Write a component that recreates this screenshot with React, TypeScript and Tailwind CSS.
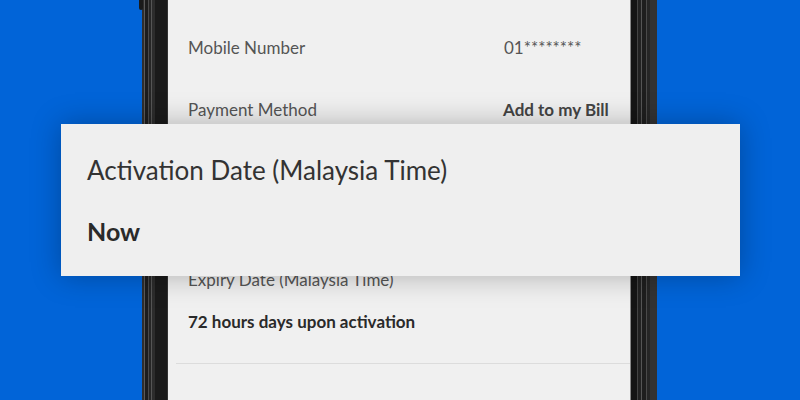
import React from "react";

export default function App() {
  const font = { fontFamily: "Lato, 'Open Sans', sans-serif" };
  return (
    <div
      className="relative w-[800px] h-[400px] overflow-hidden bg-[#0164d8]"
      style={font}
    >
      <div className="flex h-full pl-[142px]">
        {/* left frame */}
        <div className="relative flex h-full w-[26px]">
          <div className="w-[2px] bg-[#2e2e2e]" />
          <div className="w-[1px] bg-[#5a5a5a]" />
          <div className="w-[3px] bg-[#1d1d1d]" />
          <div className="w-[1px] bg-[#4a4a4a]" />
          <div className="w-[2px] bg-[#262626]" />
          <div className="w-[1px] bg-[#555]" />
          <div className="w-[3px] bg-[#2c2c2c]" />
          <div className="flex-1 bg-[#1a1a1a]" />
          <div className="w-[1px] bg-[#333]" />
        </div>
        {/* screen */}
        <div className="flex h-full w-[462px] flex-col bg-[#f0f0f0] text-[17px] leading-[24px]">
          <div className="flex px-[20px] pt-[36px]">
            <div className="w-[316px] text-[#555]">Mobile Number</div>
            <div className="text-[#555]">01********</div>
          </div>
          <div className="flex px-[20px] pt-[38px]">
            <div className="w-[315px] text-[#555]">Payment Method</div>
            <div className="font-bold text-[#444]">Add to my Bill</div>
          </div>
          <div className="flex flex-col px-[20px] pt-[146px]">
            <div className="text-[#555]">Expiry Date (Malaysia Time)</div>
            <div className="pt-[18px] font-bold text-[#2a2a2a]">
              72 hours days upon activation
            </div>
          </div>
          <div className="mt-[29px] ml-[8px] h-[1px] bg-[#dcdcdc]" />
        </div>
        {/* right frame */}
        <div className="flex h-full w-[27px]">
          <div className="w-[1px] bg-[#8a8a8a]" />
          <div className="w-[6px] bg-[#151515]" />
          <div className="w-[1px] bg-[#444]" />
          <div className="w-[3px] bg-[#222]" />
          <div className="w-[1px] bg-[#555]" />
          <div className="w-[4px] bg-[#1e1e1e]" />
          <div className="w-[1px] bg-[#4a4a4a]" />
          <div className="w-[3px] bg-[#262626]" />
          <div className="flex-1 bg-[#333]" />
        </div>
      </div>

      {/* side button */}
      <div className="absolute left-[139px] top-0 h-[10px] w-[4px] rounded-b-sm bg-[#1a1a1a]" />

      {/* overlay card */}
      <div className="absolute left-[61px] top-[124px] h-[152px] w-[679px] bg-[#efefef] pl-[26px] shadow-[0_0_28px_rgba(0,0,0,0.28)]">
        <div className="pt-[28px] text-[26px] leading-[36px] text-[#333]">
          Activation Date (Malaysia Time)
        </div>
        <div className="pt-[25px] text-[25px] font-bold leading-[36px] text-[#2a2a2a]">
          Now
        </div>
      </div>
    </div>
  );
}
